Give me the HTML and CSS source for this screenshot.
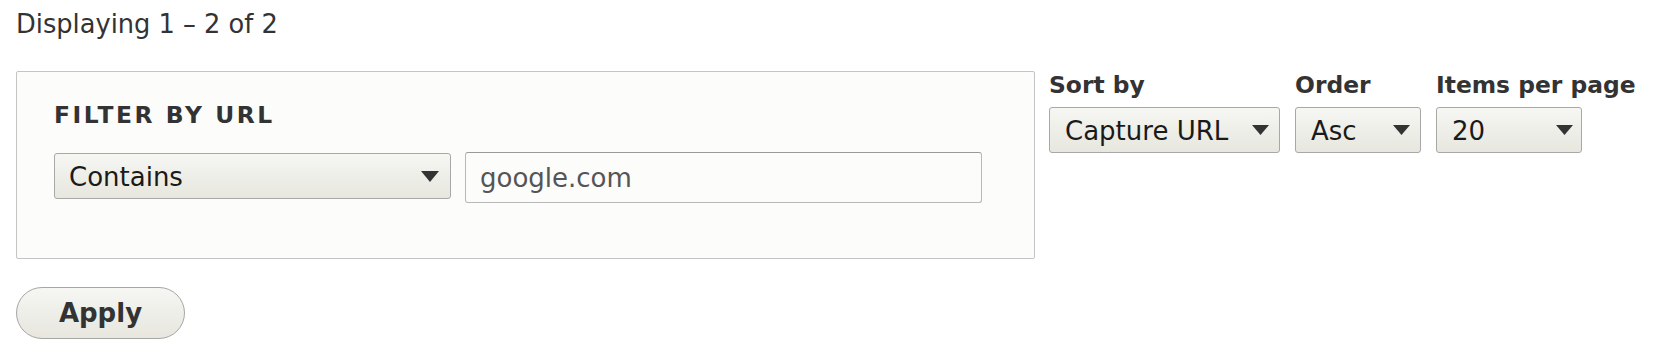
FILE: index.html
```html
<!DOCTYPE html>
<html lang="en">
<head>
<meta charset="utf-8">
<title>Captures</title>
<link rel="stylesheet" href="styles.css">
</head>
<body>
<div class="page">
  <div class="summary">Displaying 1 – 2 of 2</div>
  <form class="exposed-form">
    <div class="form-row">
      <div class="filter-box">
        <div class="filter-title">Filter by URL</div>
        <div class="filter-controls">
          <div class="select select-op">
            <span class="select-text">Contains</span>
            <svg class="arrow" width="18" height="11" viewBox="0 0 18 11"><path d="M0 0H18L9 11Z" fill="#333"/></svg>
          </div>
          <div class="text-input">google.com</div>
        </div>
      </div>
      <div class="form-item">
        <div class="form-label">Sort by</div>
        <div class="select select-sort">
          <span class="select-text">Capture URL</span>
          <svg class="arrow" width="17" height="10" viewBox="0 0 17 10"><path d="M0 0H17L8.5 10Z" fill="#333"/></svg>
        </div>
      </div>
      <div class="form-item">
        <div class="form-label">Order</div>
        <div class="select select-order">
          <span class="select-text">Asc</span>
          <svg class="arrow" width="17" height="10" viewBox="0 0 17 10"><path d="M0 0H17L8.5 10Z" fill="#333"/></svg>
        </div>
      </div>
      <div class="form-item">
        <div class="form-label">Items per page</div>
        <div class="select select-items">
          <span class="select-text">20</span>
          <svg class="arrow" width="17" height="10" viewBox="0 0 17 10"><path d="M0 0H17L8.5 10Z" fill="#333"/></svg>
        </div>
      </div>
    </div>
    <div class="actions">
      <button type="button" class="button">Apply</button>
    </div>
  </form>
</div>
</body>
</html>
```

FILE: styles.css
```css
html, body {
  margin: 0;
  padding: 0;
  background: #ffffff;
}

body {
  font-family: "DejaVu Sans", "Liberation Sans", sans-serif;
  color: #333333;
}

.page {
  padding: 0 16px;
}

.summary {
  font-size: 25.7px;
  line-height: 30px;
  padding-top: 9px;
  color: #333333;
}

.exposed-form {
  margin-top: 32px;
}

.form-row {
  display: flex;
  align-items: flex-start;
  gap: 14px;
}

.filter-box {
  box-sizing: border-box;
  width: 1019px;
  height: 188px;
  border: 1px solid #c4c4c4;
  border-radius: 2px;
  background: #fcfcfa;
  padding: 29px 0 0 37px;
}

.filter-title {
  font-size: 23.4px;
  line-height: 28px;
  font-weight: bold;
  text-transform: uppercase;
  letter-spacing: 0.11em;
  color: #333333;
}

.filter-controls {
  display: flex;
  align-items: flex-start;
  gap: 14px;
  margin-top: 23px;
}

.select {
  box-sizing: border-box;
  height: 46px;
  display: flex;
  align-items: center;
  justify-content: space-between;
  border: 1px solid #a8a8a8;
  border-radius: 3px;
  background: linear-gradient(#f6f6f3, #e7e7df);
  padding: 0 10px 0 14px;
  font-size: 26px;
  color: #1a1a1a;
}

.select-text {
  line-height: 30px;
  white-space: nowrap;
  padding-top: 1px;
}

.arrow {
  flex: none;
  display: block;
}

.select-op {
  width: 397px;
  margin-top: 1px;
  padding-right: 11px;
}

.text-input {
  box-sizing: border-box;
  width: 517px;
  height: 51px;
  border: 1px solid #b8b8b8;
  border-top-color: #9a9a9a;
  border-radius: 3px;
  background: #fcfcfa;
  padding: 7px 0 0 14px;
  font-size: 26px;
  line-height: 36px;
  color: #555555;
}

.form-item {
  display: flex;
  flex-direction: column;
}

.form-item + .form-item {
  margin-left: 1px;
}

.form-label {
  font-size: 23.4px;
  line-height: 28px;
  font-weight: bold;
  color: #333333;
  white-space: nowrap;
}

.form-item .select {
  margin-top: 8px;
}

.select-sort {
  width: 231px;
  padding-left: 15px;
}

.select-order {
  width: 126px;
  padding-left: 15px;
}

.select-items {
  width: 146px;
  padding-left: 15px;
  padding-right: 8px;
}

.actions {
  margin-top: 28px;
}

.button {
  box-sizing: border-box;
  width: 169px;
  height: 52px;
  border: 1px solid #a6a6a6;
  border-radius: 26px;
  background: linear-gradient(#f6f6f3, #e7e7df);
  font-family: "DejaVu Sans", "Liberation Sans", sans-serif;
  font-size: 26px;
  font-weight: bold;
  color: #333333;
  padding: 0;
  line-height: 30px;
  cursor: pointer;
}
```
